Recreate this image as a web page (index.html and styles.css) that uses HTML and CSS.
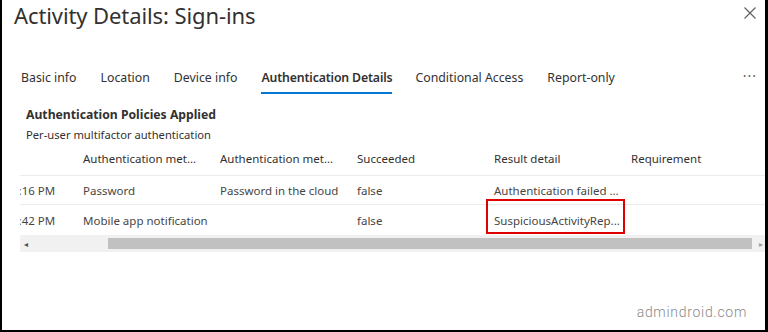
FILE: index.html
```html
<!DOCTYPE html>
<html>
<head>
<meta charset="utf-8">
<link rel="stylesheet" href="styles.css">
</head>
<body>
<div class="frame">
  <div class="titlebar">
    <h1 class="title">Activity Details: Sign-ins</h1>
    <svg class="close" width="12" height="12" viewBox="0 0 12 12"><path d="M0.5 0.5 L11.5 11.5 M11.5 0.5 L0.5 11.5" stroke="#605e5c" stroke-width="1.1" fill="none"/></svg>
  </div>
  <div class="tabs">
    <span class="tab">Basic info</span>
    <span class="tab">Location</span>
    <span class="tab">Device info</span>
    <span class="tab active">Authentication Details</span>
    <span class="tab">Conditional Access</span>
    <span class="tab">Report-only</span>
    <span class="more">···</span>
  </div>
  <div class="section">
    <div class="sec-title">Authentication Policies Applied</div>
    <div class="sec-sub">Per-user multifactor authentication</div>
  </div>
  <div class="tablewrap">
    <div class="grid">
      <div class="row head">
        <div class="c c1"></div>
        <div class="c">Authentication met...</div>
        <div class="c">Authentication met...</div>
        <div class="c">Succeeded</div>
        <div class="c">Result detail</div>
        <div class="c">Requirement</div>
      </div>
      <div class="row r1">
        <div class="c c1">2:16 PM</div>
        <div class="c">Password</div>
        <div class="c">Password in the cloud</div>
        <div class="c">false</div>
        <div class="c">Authentication failed ...</div>
        <div class="c"></div>
      </div>
      <div class="row last">
        <div class="c c1">2:42 PM</div>
        <div class="c">Mobile app notification</div>
        <div class="c"></div>
        <div class="c">false</div>
        <div class="c"><span class="hl">SuspiciousActivityRep...</span></div>
        <div class="c"></div>
      </div>
    </div>
    <div class="scrollbar">
      <span class="arr">&#9666;</span>
      <div class="track"><div class="thumb"></div></div>
      <span class="arr">&#9656;</span>
    </div>
  </div>
  <div class="watermark">admindroid.com</div>
</div>
</body>
</html>
```
FILE: styles.css
```css
html, body { margin: 0; padding: 0; background: #fff; }
body { font-family: "Segoe UI", "Noto Sans", "Open Sans", sans-serif; color: #323130; }
.frame {
  width: 768px; height: 332px; box-sizing: border-box;
  border-left: 2px solid #000; border-right: 3px solid #000; border-bottom: 2px solid #000;
  position: relative; overflow: hidden;
}
.titlebar { display: flex; justify-content: space-between; align-items: flex-start; padding: 0 9px 0 12px; height: 64px; }
.title { margin: 0; font-size: 22px; font-weight: 400; line-height: 30px; color: #323130; letter-spacing: -0.1px; }
.close { margin-top: 7px; }
.tabs { display: flex; align-items: flex-start; padding-left: 19px; height: 40px; }
.tab { font-size: 12.3px; line-height: 22px; margin-right: 24px; padding-top: 3px; height: 30px; box-sizing: border-box; color: #323130; white-space: nowrap; }
.tab.active { font-weight: 600; border-bottom: 2px solid #0078d4; letter-spacing: -0.15px; margin-right: 23px; }
.more { margin-left: auto; margin-right: 8px; font-size: 14px; line-height: 22px; padding-top: 1px; color: #605e5c; letter-spacing: 1px; }
.section { padding-left: 24px; padding-top: 1px; }
.sec-title { font-size: 12.2px; font-weight: 700; line-height: 20px; color: #323130; }
.sec-sub { font-size: 11.2px; line-height: 20px; color: #323130; }
.tablewrap { margin-left: 18px; width: 745px; overflow: hidden; }
.grid { margin-left: -8px; width: 770px; }
.row { display: flex; height: 28px; align-items: center; border-bottom: 1px solid #edebe9; font-size: 11.5px; color: #484644; }
.row.head { padding-bottom: 3px; box-sizing: border-box; height: 31px; color: #323130; }
.row.last { border-bottom: none; height: 30px; }
.c { width: 137px; flex: none; white-space: nowrap; position: relative; }
.c1 { width: 71px; }
.hl { position: relative; }
.hl::before { content: ""; position: absolute; left: -8px; right: -5px; top: -14px; bottom: -6px; border: 2px solid #e00000; }
.scrollbar { display: flex; align-items: center; height: 17px; background: #f1f1f1; width: 747px; }
.arr { font-size: 8px; color: #505050; width: 12px; text-align: center; line-height: 17px; }
.track { flex: 1; height: 11px; padding-left: 76px; padding-right: 3px; }
.thumb { height: 11px; background: #c1c1c1; }
.scrollbar .arr:last-child { color: #a0a0a0; }
.watermark { position: absolute; right: 18px; bottom: 10px; font-family: "Roboto", sans-serif; font-weight: 300; font-size: 14px; letter-spacing: 0.7px; color: #8a8a8a; }
```
